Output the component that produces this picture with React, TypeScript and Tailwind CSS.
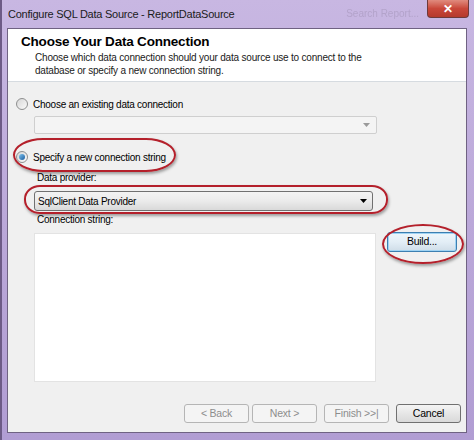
import React from "react";

const font = { fontFamily: '"Liberation Sans", Arial, sans-serif' };

function Ellipse({ cls }: { cls: string }) {
  return (
    <div
      className={`absolute border-2 border-[#b4202b] shadow-[1px_2px_3px_rgba(0,0,0,0.35)] pointer-events-none ${cls}`}
    />
  );
}

function Radio({ checked }: { checked?: boolean }) {
  return (
    <div className="w-[12px] h-[12px] rounded-full border border-[#8e8f8f] bg-gradient-to-br from-[#d6d6d6] to-[#fbfbfb] flex items-center justify-center shrink-0">
      {checked && (
        <div className="w-[6px] h-[6px] rounded-full bg-gradient-to-br from-[#7fc4ee] to-[#1a5c9e]" />
      )}
    </div>
  );
}

function Btn({ label, disabled, cls }: { label: string; disabled?: boolean; cls?: string }) {
  return (
    <div
      className={`h-[19px] w-[65px] rounded-[3px] border flex items-center justify-center text-[10.5px] tracking-[-0.2px] ${
        disabled
          ? "border-[#b5b5b5] bg-[#f4f4f4] text-[#8d8d8d]"
          : "border-[#707070] bg-gradient-to-b from-[#f4f4f4] to-[#d9d9d9] text-black"
      } ${cls ?? ""}`}
    >
      {label}
    </div>
  );
}

export default function App() {
  return (
    <div
      className="w-[474px] h-[440px] overflow-hidden flex flex-col bg-gradient-to-b from-[#c8b7e2] via-[#bba8d9] to-[#b19dd3] border-l-2 border-[#6d5b86]"
      style={font}
    >
      {/* Title bar */}
      <div className="h-[28px] flex items-start shrink-0">
        <div className="pl-[6px] pt-[7px] text-[11px] tracking-[-0.25px] text-[#1b1b1b] leading-[14px]">
          Configure SQL Data Source - ReportDataSource
        </div>
        <div className="flex-1" />
        <div className="pt-[7px] pr-[8px] text-[10px] text-[#b3a3ca] leading-[14px] blur-[0.6px]">Search Report...</div>
        <div className="w-[42px] h-[18px] mr-[5px] rounded-b-[4px] border border-t-0 border-[#6e3a3a] bg-gradient-to-b from-[#e08a7e] via-[#c9473a] to-[#b53a2c] flex items-center justify-center shrink-0">
          <span className="text-white font-bold text-[12px] leading-none">✕</span>
        </div>
      </div>

      {/* Client */}
      <div className="mx-[5px] mr-[7px] h-[405px] border border-[#6f6282] flex flex-col">
        {/* Header */}
        <div className="h-[53px] bg-white border-b border-[#d6dbe0] pl-[13px] pt-[5px] shrink-0">
          <div className="text-[13.5px] tracking-[-0.2px] font-bold leading-[16px] text-black">Choose Your Data Connection</div>
          <div className="pl-[14px] pt-[1px] text-[10px] tracking-[-0.2px] leading-[13px] text-[#1a1a1a]">
            Choose which data connection should your data source use to connect to the
            <br />
            database or specify a new connection string.
          </div>
        </div>

        {/* Body */}
        <div className="flex-1 bg-[#f0f0f0] relative pt-[15px] flex flex-col text-[10px] tracking-[-0.25px] text-black">
          <div className="flex items-center h-[14px] pl-[8px] gap-[5px]">
            <Radio />
            <span>Choose an existing data connection</span>
          </div>
          <div className="ml-[26px] mt-[5px] w-[343px] h-[18px] border border-[#cfcfcf] rounded-[2px] bg-[#f4f4f4] flex items-center justify-end pr-[6px]">
            <svg width="7" height="4" viewBox="0 0 7 4">
              <path d="M0 0h7L3.5 4z" fill="#9a9a9a" />
            </svg>
          </div>

          <div className="flex items-center h-[14px] pl-[8px] gap-[5px] mt-[16px]">
            <Radio checked />
            <span>Specify a new connection string</span>
          </div>
          <div className="ml-[29px] mt-[7px] h-[14px] leading-[14px]">Data provider:</div>
          <div className="ml-[26px] mt-[6px] w-[339px] h-[20px] border border-[#707070] rounded-[3px] bg-gradient-to-b from-[#f3f3f3] via-[#ebebeb] to-[#d9d9d9] flex items-center pl-[3px] pr-[5px]">
            <span className="flex-1">SqlClient Data Provider</span>
            <svg width="7" height="4" viewBox="0 0 7 4">
              <path d="M0 0h7L3.5 4z" fill="#000" />
            </svg>
          </div>
          <div className="ml-[29px] mt-[2px] h-[14px] leading-[14px]">Connection string:</div>
          <div className="flex items-start mt-[6px] ml-[26px]">
            <div className="w-[342px] h-[149px] bg-white border border-[#e3e3e3]" />
            <div className="ml-[11px] -mt-[1px] w-[70px] h-[20px] rounded-[3px] border border-[#3c7fb1] bg-gradient-to-b from-[#eef6fb] via-[#e3eef6] to-[#cfdde8] shadow-[inset_0_0_0_1px_#9fd3f3] flex items-center justify-center text-[10.5px]">
              Build...
            </div>
          </div>

          <div className="flex justify-end mt-[22px] pr-[5px]">
            <Btn label="< Back" disabled />
            <Btn label="Next >" disabled cls="ml-[3px]" />
            <Btn label="Finish >>|" disabled cls="ml-[7px]" />
            <Btn label="Cancel" cls="ml-[7px]" />
          </div>

          <Ellipse cls="left-[5px] top-[56px] w-[163px] h-[34px] rounded-[30px/17px]" />
          <Ellipse cls="left-[16px] top-[103px] w-[364px] h-[29px] rounded-[16px/14px]" />
          <Ellipse cls="left-[374px] top-[142px] w-[82px] h-[40px] rounded-[50%]" />
        </div>
      </div>
    </div>
  );
}
